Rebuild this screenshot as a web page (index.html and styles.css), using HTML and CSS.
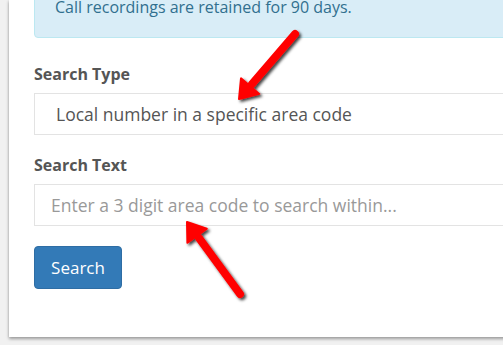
FILE: index.html
```html
<!DOCTYPE html>
<html lang="en">
<head>
  <meta charset="UTF-8" />
  <meta name="viewport" content="width=device-width, initial-scale=1.0" />
  <title>Number Search</title>
  <link rel="stylesheet" href="styles.css">
</head>
<body>
  <div class="card">
    <div class="alert">Call recordings are retained for 90 days.</div>

    <div class="form-group">
      <label class="field-label">Search Type</label>
      <div class="field select-field">Local number in a specific area code</div>
    </div>

    <div class="form-group">
      <label class="field-label" for="search-text">Search Text</label>
      <input class="field" id="search-text" type="text" placeholder="Enter a 3 digit area code to search within..." />
    </div>

    <button class="btn-search">Search</button>
  </div>

  <!-- annotation arrows drawn over the form -->
  <svg class="arrows" width="503" height="345" viewBox="0 0 503 345">
    <defs>
      <filter id="shadow" x="-20%" y="-20%" width="140%" height="140%">
        <feDropShadow dx="2" dy="2" stdDeviation="1.5" flood-color="#000" flood-opacity="0.75" />
      </filter>
    </defs>
    <g filter="url(#shadow)" fill="#ff0000" stroke="#ff0000" stroke-linecap="round" stroke-linejoin="round">
      <line x1="295" y1="34" x2="252" y2="84" stroke-width="8" />
      <polygon points="239,99 259.2,93.9 241,78.3" stroke-width="2" />
      <line x1="240" y1="294" x2="199" y2="238" stroke-width="8" />
      <polygon points="187,222 206.8,228.6 187.4,242.8" stroke-width="2" />
    </g>
  </svg>
</body>
</html>
```

FILE: styles.css
```css
* {
  box-sizing: border-box;
}
body {
  margin: 0;
  padding: 0 0 0 9px;
  background: #f1f1f1;
  font-family: "Open Sans", Arial, sans-serif;
  overflow: hidden;
  position: relative;
  height: 345px;
}
.card {
  display: flow-root;
  width: 620px;
  height: 337px;
  background: #fff;
  padding: 0 0 0 25px;
  box-shadow: 0 2px 3px rgba(0, 0, 0, 0.35), -1px 0 2px rgba(0, 0, 0, 0.06);
}
.alert {
  margin-top: -19px;
  margin-bottom: 26px;
  padding: 15px 20px 19px;
  background: #d9edf7;
  border: 1px solid #bce8f1;
  border-radius: 4px;
  color: #31708f;
  font-size: 16px;
  line-height: 21px;
}
.form-group {
  margin-bottom: 20px;
}
.field-label {
  display: block;
  margin-bottom: 8px;
  color: #555;
  font-size: 16px;
  font-weight: 700;
  line-height: 21px;
}
.field {
  display: flex;
  align-items: center;
  width: 100%;
  height: 42px;
  border: 1px solid #e3e3e3;
  border-radius: 0;
  background: #fff;
  color: #555;
  font-family: "Open Sans", Arial, sans-serif;
  font-size: 17.5px;
  outline: none;
}
.select-field {
  padding-left: 21px;
}
input.field {
  padding: 0 16px;
}
input.field::placeholder {
  color: #999;
}
.btn-search {
  width: 88px;
  height: 43px;
  background: #337ab7;
  border: 1px solid #2e6da4;
  border-radius: 4px;
  color: #fff;
  font-family: "Open Sans", Arial, sans-serif;
  font-size: 17px;
}
.arrows {
  position: absolute;
  top: 0;
  left: 0;
  pointer-events: none;
}
```
